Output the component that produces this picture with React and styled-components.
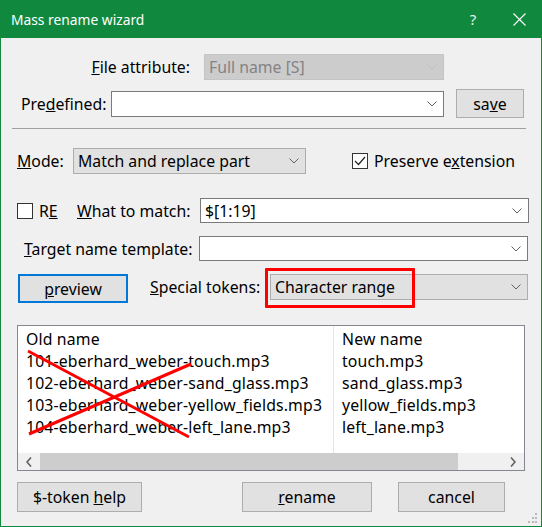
import React from 'react';
import styled, { createGlobalStyle, css } from 'styled-components';

const GlobalStyle = createGlobalStyle`
  body {
    margin: 0;
    background: #ffffff;
    font-family: "Noto Sans", sans-serif;
  }
`;

const Window = styled.div`
  position: relative;
  width: 542px;
  height: 527px;
  box-sizing: border-box;
  border: 1px solid #10893e;
  border-top: none;
  background: #f0f0f0;
  display: flex;
  flex-direction: column;
  font-size: 15.8px;
  color: #000000;
`;

const TitleBar = styled.div`
  height: 38px;
  margin: 0 -1px;
  background: #10893e;
  color: #ffffff;
  display: flex;
  align-items: center;
  padding-left: 11px;
`;

const TitleText = styled.div`
  flex-grow: 1;
  font-size: 13.8px;
`;

const TitleButton = styled.div`
  width: 46px;
  height: 38px;
  display: flex;
  align-items: center;
  justify-content: center;
  font-size: 15px;
  color: #e8f3ec;
`;

const Row = styled.div`
  display: flex;
  align-items: center;
  height: ${props => props.$h}px;
  margin-top: ${props => props.$mt}px;
  padding-left: ${props => props.$pl || 0}px;
`;

const Label = styled.div`
  width: ${props => props.$w}px;
  margin-left: ${props => props.$ml || 0}px;
  text-align: ${props => (props.$right ? 'right' : 'left')};
  white-space: nowrap;
  flex-shrink: 0;
`;

const Key = styled.span`
  text-decoration: underline;
  text-underline-offset: 1px;
`;

const Combo = styled.div`
  position: relative;
  box-sizing: border-box;
  width: ${props => props.$w}px;
  height: ${props => props.$h || 26}px;
  margin-left: ${props => props.$ml || 0}px;
  display: flex;
  align-items: center;
  padding: 0 6px 0 4px;
  flex-shrink: 0;
  border: 1px solid #7a7a7a;
  background: #ffffff;

  ${props =>
    props.$kind === 'disabled' &&
    css`
      border-color: #c4c4c4;
      background: #cccccc;
      color: #838383;
    `};

  ${props =>
    props.$kind === 'button' &&
    css`
      border-color: #adadad;
      background: #e1e1e1;
    `};
`;

const ComboText = styled.div`
  flex-grow: 1;
  white-space: nowrap;
`;

const Button = styled.div`
  box-sizing: border-box;
  width: ${props => props.$w}px;
  height: ${props => props.$h || 30}px;
  margin-left: ${props => props.$ml || 0}px;
  margin-top: ${props => props.$mt || 0}px;
  display: flex;
  align-items: center;
  justify-content: center;
  flex-shrink: 0;
  background: #e1e1e1;
  border: 1px solid #adadad;

  ${props =>
    props.$focused &&
    css`
      border: 2px solid #0078d7;
    `};
`;

const Separator = styled.div`
  height: 1px;
  margin: 10px 15px 0 11px;
  background: #a0a0a0;
`;

const CheckBox = styled.div`
  box-sizing: border-box;
  width: 16px;
  height: 16px;
  margin-left: ${props => props.$ml || 0}px;
  margin-right: 6px;
  flex-shrink: 0;
  border: 1px solid #333333;
  background: #ffffff;
  display: flex;
  align-items: center;
  justify-content: center;
`;

const Highlight = styled.div`
  position: absolute;
  left: -6px;
  top: -7px;
  width: 150px;
  height: 40px;
  box-sizing: border-box;
  border: 3px solid #ff0000;
  border-radius: 1px;
  pointer-events: none;
`;

const ListBox = styled.div`
  position: relative;
  box-sizing: border-box;
  width: 508px;
  height: 146px;
  margin: 18px 0 0 16px;
  border: 1px solid #828790;
  background: #ffffff;
  display: flex;
  flex-direction: column;
  overflow: hidden;
`;

const Columns = styled.div`
  flex-grow: 1;
  display: grid;
  grid-template-columns: 316px 1fr;
  letter-spacing: 0.15px;
`;

const Column = styled.div`
  padding: 2px 0 0 8px;
  border-right: ${props => (props.$divider ? '1px solid #e5e5e5' : 'none')};
`;

const Cell = styled.div`
  height: 22px;
  line-height: 22px;
  white-space: nowrap;
`;

const ScrollBar = styled.div`
  height: 17px;
  display: flex;
  align-items: center;
  background: #f0f0f0;
`;

const ScrollArrow = styled.div`
  width: 22px;
  height: 17px;
  display: flex;
  align-items: center;
  justify-content: center;
  flex-shrink: 0;
`;

const ScrollTrack = styled.div`
  flex-grow: 1;
  height: 17px;
  display: flex;
`;

const ScrollThumb = styled.div`
  width: 418px;
  height: 17px;
  background: #cdcdcd;
`;

const CrossOut = styled.svg`
  position: absolute;
  left: 0;
  top: 0;
  pointer-events: none;
`;

const Grip = styled.svg`
  position: absolute;
  right: 3px;
  bottom: 2px;
`;

const Chevron = ({ color = '#606060' }) => (
  <svg width="10" height="6" viewBox="0 0 10 6">
    <polyline points="0.5,0.5 5,5 9.5,0.5" fill="none" stroke={color} strokeWidth="1" />
  </svg>
);

const SideArrow = ({ dir }) => (
  <svg width="6" height="10" viewBox="0 0 6 10">
    <polyline
      points={dir === 'left' ? '5,0.5 1,5 5,9.5' : '1,0.5 5,5 1,9.5'}
      fill="none"
      stroke="#606060"
      strokeWidth="1.6"
    />
  </svg>
);

const files = [
  ['101-eberhard_weber-touch.mp3', 'touch.mp3'],
  ['102-eberhard_weber-sand_glass.mp3', 'sand_glass.mp3'],
  ['103-eberhard_weber-yellow_fields.mp3', 'yellow_fields.mp3'],
  ['104-eberhard_weber-left_lane.mp3', 'left_lane.mp3'],
];

export default function App() {
  return (
    <>
      <GlobalStyle />
      <Window>
        <TitleBar>
          <TitleText>Mass rename wizard</TitleText>
          <TitleButton>?</TitleButton>
          <TitleButton>
            <svg width="13" height="13" viewBox="0 0 13 13">
              <path d="M0.5 0.5 L12.5 12.5 M12.5 0.5 L0.5 12.5" stroke="#ffffff" strokeWidth="1.1" />
            </svg>
          </TitleButton>
        </TitleBar>

        <Row $h={26} $mt={16}>
          <Label $w={189} $right>
            <Key>F</Key>ile attribute:
          </Label>
          <Combo $w={240} $ml={14} $kind="disabled">
            <ComboText>Full name [S]</ComboText>
            <Chevron color="#bdbdbd" />
          </Combo>
        </Row>

        <Row $h={29} $mt={9} $pl={20}>
          <Label $w={90}>
            Pre<Key>d</Key>efined:
          </Label>
          <Combo $w={333}>
            <ComboText />
            <Chevron />
          </Combo>
          <Button $w={68} $h={29} $ml={12}>
            sa<Key>v</Key>e
          </Button>
        </Row>

        <Separator />

        <Row $h={26} $mt={19} $pl={16}>
          <Label $w={56}>
            <Key>M</Key>ode:
          </Label>
          <Combo $w={233} $kind="button">
            <ComboText>Match and replace part</ComboText>
            <Chevron />
          </Combo>
          <CheckBox $ml={46}>
            <svg width="12" height="10" viewBox="0 0 12 10">
              <polyline points="1,5 4.5,8.5 11,1" fill="none" stroke="#222222" strokeWidth="1.2" />
            </svg>
          </CheckBox>
          <Label>
            Preserve e<Key>x</Key>tension
          </Label>
        </Row>

        <Row $h={25} $mt={24} $pl={16}>
          <CheckBox />
          <Label $w={38}>
            R<Key>E</Key>
          </Label>
          <Label $w={123}>
            <Key>W</Key>hat to match:
          </Label>
          <Combo $w={329} $h={25}>
            <ComboText>$[1:19]</ComboText>
            <Chevron />
          </Combo>
        </Row>

        <Row $h={25} $mt={13} $pl={23}>
          <Label $w={175}>
            <Key>T</Key>arget name template:
          </Label>
          <Combo $w={329} $h={25}>
            <ComboText />
            <Chevron />
          </Combo>
        </Row>

        <Row $h={40} $mt={6} $pl={17}>
          <Button $w={110} $h={29} $mt={3} $focused>
            <span>
              <Key>p</Key>review
            </span>
          </Button>
          <Label $w={120} $ml={22}>
            <Key>S</Key>pecial tokens:
          </Label>
          <Combo $w={258} $kind="button">
            <ComboText>Character range</ComboText>
            <Chevron />
            <Highlight />
          </Combo>
        </Row>

        <ListBox>
          <Columns>
            <Column $divider>
              <Cell>Old name</Cell>
              {files.map(([oldName]) => (
                <Cell key={oldName}>{oldName}</Cell>
              ))}
            </Column>
            <Column>
              <Cell>New name</Cell>
              {files.map(([oldName, newName]) => (
                <Cell key={newName}>{newName}</Cell>
              ))}
            </Column>
          </Columns>
          <ScrollBar>
            <ScrollArrow>
              <SideArrow dir="left" />
            </ScrollArrow>
            <ScrollTrack>
              <ScrollThumb />
            </ScrollTrack>
            <ScrollArrow>
              <SideArrow dir="right" />
            </ScrollArrow>
          </ScrollBar>
          <CrossOut width="508" height="146">
            <path d="M10 25 L171 111 M11 108 L173 38" stroke="#ff0000" strokeWidth="3" />
          </CrossOut>
        </ListBox>

        <Row $h={30} $mt={11} $pl={16}>
          <Button $w={125}>
            <span>
              $-token <Key>h</Key>elp
            </span>
          </Button>
          <Button $w={130} $ml={100}>
            <span>
              <Key>r</Key>ename
            </span>
          </Button>
          <Button $w={107} $ml={26}>
            cancel
          </Button>
        </Row>

        <Grip width="12" height="12" viewBox="0 0 12 12">
          <g fill="#b9b9b9">
            <rect x="9" y="1" width="2" height="2" />
            <rect x="6" y="5" width="2" height="2" />
            <rect x="9" y="5" width="2" height="2" />
            <rect x="2" y="9" width="2" height="2" />
            <rect x="6" y="9" width="2" height="2" />
            <rect x="9" y="9" width="2" height="2" />
          </g>
        </Grip>
      </Window>
    </>
  );
}
